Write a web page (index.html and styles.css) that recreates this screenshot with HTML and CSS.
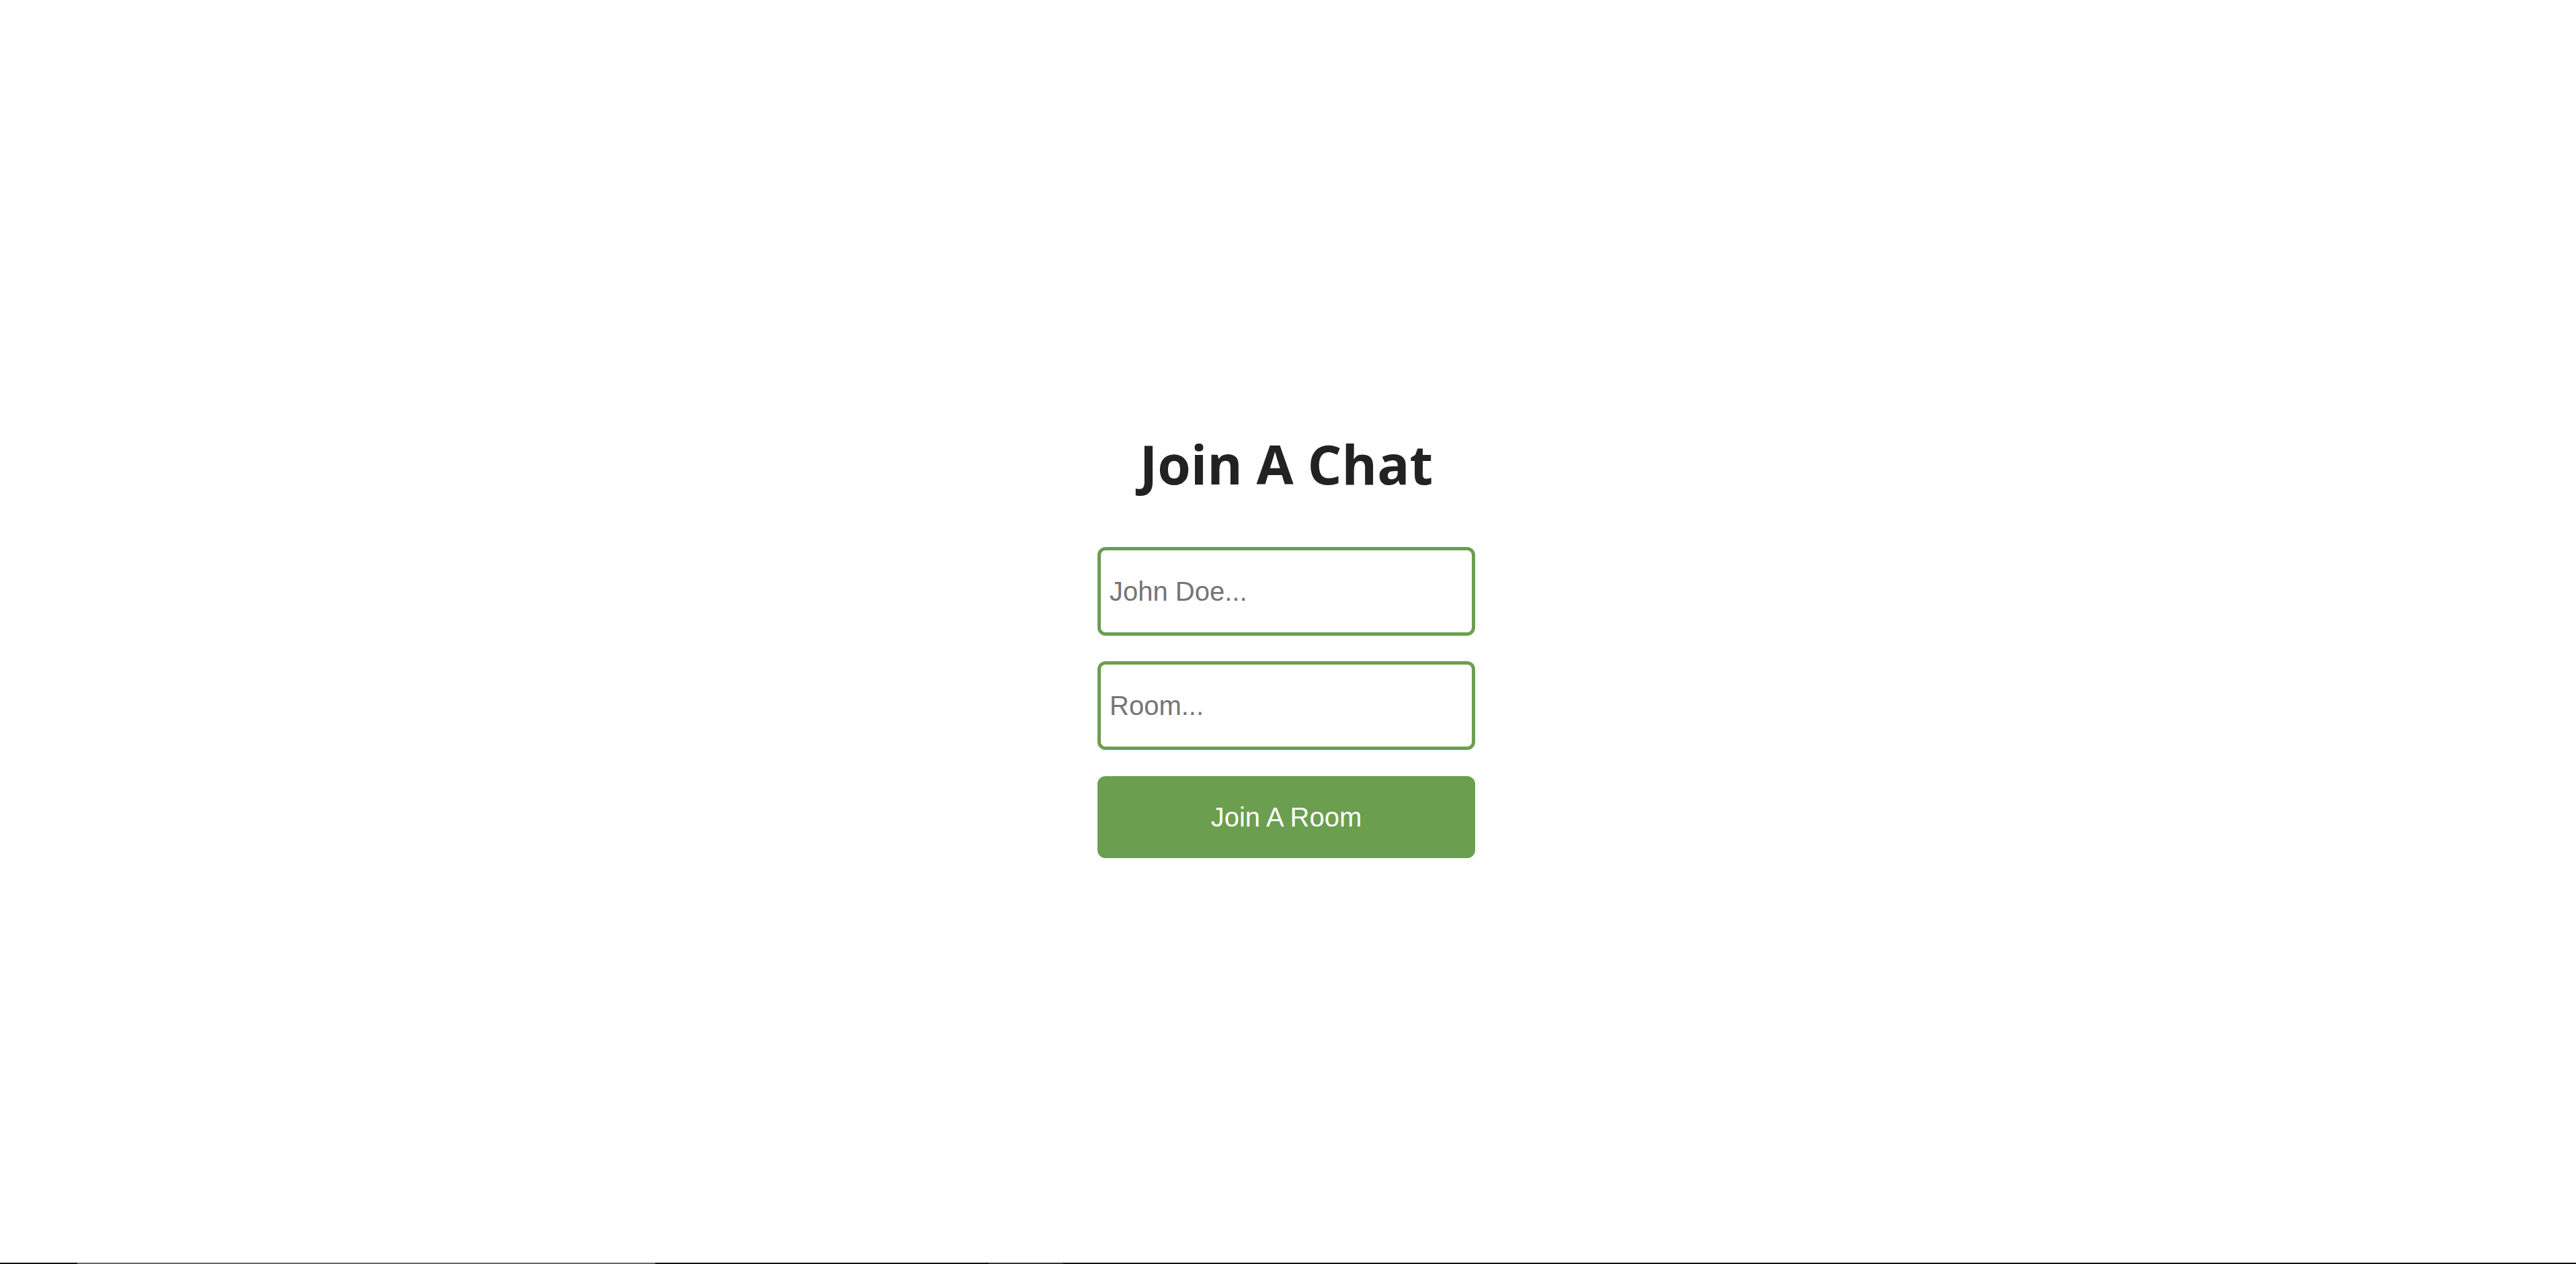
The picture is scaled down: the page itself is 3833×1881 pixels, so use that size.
FILE: index.html
```html
<!DOCTYPE html>
<html lang="en">
<head>
  <meta charset="UTF-8">
  <title>Join A Chat</title>
  <meta name="viewport" content="width=device-width, initial-scale=1.0">
  <link rel="stylesheet" href="styles.css">
</head>
<body>

<div class="joinChatContainer">
  <h3>Join A Chat</h3>
  <input type="text" placeholder="John Doe...">
  <input type="text" placeholder="Room...">
  <button>Join A Room</button>
</div>

<!-- strip along the bottom edge -->
<div class="bottomStrip"></div>

</body>
</html>
```

FILE: styles.css
```css
body {
  margin: 0;
  background-color: #fff;
  font-family: "Liberation Sans", Arial, sans-serif;
  min-height: 100vh;
  display: flex;
  justify-content: center;
  align-items: center;
}

.joinChatContainer {
  display: flex;
  flex-direction: column;
  align-items: center;
  width: 562px;
  margin-right: 5px;
}

.joinChatContainer h3 {
  font-family: "Open Sans", sans-serif;
  font-weight: 700;
  font-size: 80px;
  color: #222;
  margin: 31px 0 70px 0;
}

.joinChatContainer input {
  box-sizing: border-box;
  width: 100%;
  height: 132px;
  margin-bottom: 38px;
  padding: 0 13px;
  font-family: "Liberation Sans", Arial, sans-serif;
  font-size: 40px;
  border: 5px solid #6b9e4e;
  border-radius: 12px;
  outline: none;
}

.joinChatContainer input::placeholder {
  color: #757575;
}

.joinChatContainer button {
  box-sizing: border-box;
  width: 100%;
  height: 122px;
  margin-top: 1px;
  border: none;
  border-radius: 12px;
  background-color: #6b9e4e;
  color: #fff;
  font-family: "Liberation Sans", Arial, sans-serif;
  font-size: 40px;
  cursor: pointer;
}

.bottomStrip {
  position: fixed;
  left: 0;
  right: 0;
  bottom: 0;
  height: 2px;
  background: linear-gradient(to right,
    #111 0, #111 115px,
    #666 115px, #666 975px,
    #111 975px, #111 1471px,
    #333 1471px, #333 1582px,
    #111 1582px, #111 100%);
}
```
